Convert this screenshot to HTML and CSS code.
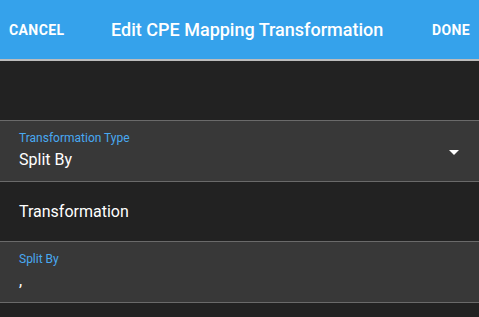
FILE: index.html
```html
<html lang="en">
<head>
<meta charset="utf-8"/>
<title>Edit CPE Mapping Transformation</title>
<link rel="stylesheet" href="styles.css">
</head>
<body>

<div class="toolbar">
  <button class="action">CANCEL</button>
  <h1 class="title">Edit CPE Mapping Transformation</h1>
  <button class="action">DONE</button>
</div>

<div class="row spacer"></div>

<div class="row field">
  <label class="field-label">Transformation Type</label>
  <div class="field-value">Split By</div>
  <svg class="caret" width="10" height="5" viewBox="0 0 10 5"><path d="M0 0h10L5 5z" fill="#fff"/></svg>
</div>

<div class="row heading">Transformation</div>

<div class="row field">
  <label class="field-label">Split By</label>
  <div class="field-value">,</div>
</div>

</body>
</html>
```

FILE: styles.css
```css
body {
  margin: 0;
  background: #222222;
  font-family: Roboto, "Liberation Sans", sans-serif;
  color: #fff;
}
.toolbar {
  display: flex;
  align-items: center;
  justify-content: space-between;
  height: 59px;
  padding: 0 9px;
  background: #35a2eb;
  border-bottom: 2px solid #bcbcbc;
}
.action {
  border: 0;
  background: none;
  padding: 0;
  color: #fff;
  font: 700 14px Roboto, "Liberation Sans", sans-serif;
  letter-spacing: 0.4px;
}
.title {
  margin: 0 2px 0 0;
  font-size: 18px;
  font-weight: 500;
}
.row {
  border-bottom: 1px solid #6a6a6a;
  box-sizing: border-box;
}
.spacer {
  height: 60px;
}
.field {
  position: relative;
  height: 61px;
  padding: 10px 19px 0;
  background: #383838;
}
.field-label {
  display: block;
  font-size: 12px;
  color: #48a9f2;
  line-height: 14px;
}
.field-value {
  margin-top: 5px;
  font-size: 16px;
  line-height: 20px;
}
.caret {
  position: absolute;
  right: 20px;
  top: 29px;
}
.heading {
  display: flex;
  align-items: center;
  height: 60px;
  padding: 0 19px;
  font-size: 16px;
}
```
